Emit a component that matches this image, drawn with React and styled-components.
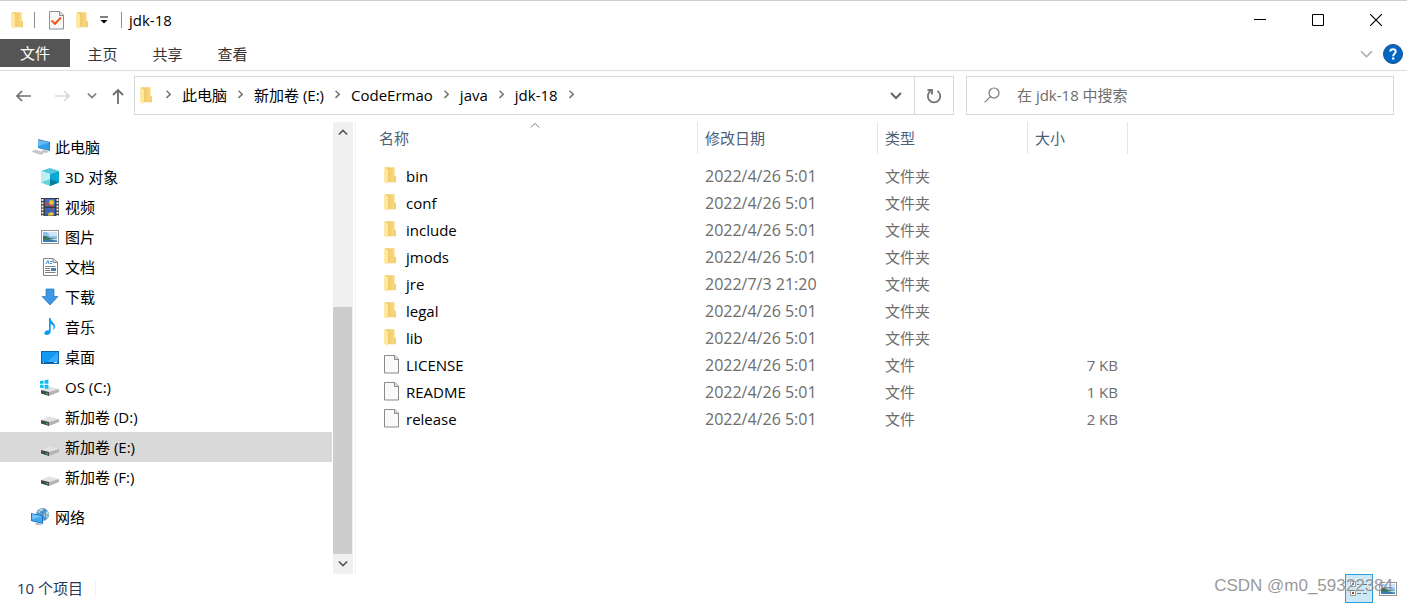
import React, { useState } from "react";
import styled, { createGlobalStyle, css } from 'styled-components';

const GlobalStyle = createGlobalStyle`
    * { box-sizing: border-box; }
    body {
        margin: 0;
        background: #fff;
        color: #000;
        font: 15px/20px "Open Sans", "Noto Sans CJK SC", sans-serif;
    }
    button, input {
        font: inherit;
        color: inherit;
        border: 0;
        padding: 0;
        margin: 0;
        background: none;
    }
    svg { display: block; flex: none; }
`

const Window = styled.div`
    position: relative;
    display: flex;
    flex-direction: column;
    min-height: 100vh;
`

const TitleBar = styled.header`
    display: flex;
    align-items: center;
    height: 39px;
    padding: 0 2px 0 11px;
    border-top: 1px solid #cdcdcd;
`

const QuickAccess = styled.div`
    display: flex;
    align-items: center;
    gap: 11px;
    height: 100%;
`

const QuickGroup = styled.div`
    display: flex;
    align-items: center;
    gap: 12px;
    padding: 0 13px 0 3px;
`

const BarLine = styled.span`
    width: 1px;
    height: 16px;
    background: #8c8c8c;
`

const Title = styled.h1`
    flex: 1;
    margin: 0 0 0 7px;
    font-size: 15px;
    font-weight: 400;
    line-height: 20px;
`

const IconButton = styled.button`
    display: flex;
    align-items: center;
    justify-content: center;
    width: ${p => p.$w ? p.$w + "px" : "auto"};
    height: ${p => p.$tall ? "100%" : "auto"};
`

const Ribbon = styled.nav`
    display: flex;
    height: 32px;
    border-bottom: 1px solid #dadbdc;
`

const Tab = styled.button`
    width: 65px;
    height: 28px;
    padding-top: 2px;
    color: #333;
    ${p => p.$file && css`
        width: 70px;
        padding-top: 0;
        background: #555;
        color: #fff;
    `}
`

const RibbonTools = styled.div`
    display: flex;
    align-items: center;
    gap: 10px;
    height: 30px;
    margin-left: auto;
    padding-right: 4px;
`

const AddressRow = styled.div`
    display: flex;
    align-items: flex-start;
    height: 51px;
    padding: 5px 13px 0 0;
`

const NavButtons = styled.div`
    display: grid;
    grid-template-columns: 40px 32px 25px 1fr;
    align-items: center;
    justify-items: start;
    width: 134px;
    height: 40px;
    padding-left: 15px;
`

const AddressBar = styled.div`
    flex: 1;
    display: flex;
    align-items: center;
    height: 39px;
    border: 1px solid #d9d9d9;
    padding-left: 5px;
`

const Crumbs = styled.div`
    flex: 1;
    display: flex;
    align-items: center;
    gap: 11px;
    padding: 0 0 2px 14px;
`

const RefreshBox = styled.div`
    display: flex;
    width: 39px;
    height: 100%;
    border-left: 1px solid #d9d9d9;
`

const SearchBox = styled.label`
    display: flex;
    align-items: center;
    gap: 17px;
    width: 428px;
    height: 39px;
    margin-left: 12px;
    padding: 0 0 2px 17px;
    border: 1px solid #d9d9d9;
    input {
        flex: 1;
        min-width: 0;
        outline: none;
    }
    input::placeholder { color: #6d6d6d; opacity: 1; }
`

const Main = styled.main`
    flex: 1;
    display: flex;
`

const SideBar = styled.ul`
    width: 333px;
    margin: 0;
    padding: 10px 1px 0 0;
    list-style: none;
`

const SideItem = styled.li`
    margin-top: ${p => p.$gap ? "10px" : "0"};
    button {
        display: flex;
        align-items: center;
        gap: ${p => p.$top ? "3px" : "5px"};
        width: 100%;
        height: 30px;
        padding-left: ${p => p.$top ? "30px" : "40px"};
        background: ${p => p.$active ? "#d9d9d9" : "transparent"};
    }
`

const ScrollBar = styled.div`
    display: flex;
    flex-direction: column;
    width: 20px;
    margin-right: 2px;
    background: #f0f0f0;
`

const ScrollTrack = styled.div`
    flex: 1;
    display: flex;
    align-items: flex-end;
    padding-right: 1px;
    &::after {
        content: "";
        width: 100%;
        height: 60%;
        background: #cdcdcd;
    }
`

const ScrollButton = styled(IconButton)`
    width: 20px;
    height: 20px;
`

const FilePane = styled.section`
    flex: 1;
    min-width: 0;
    padding-left: 15px;
    border-left: 1px solid #f2f2f2;
`

const FileTable = styled.table`
    width: 757px;
    table-layout: fixed;
    border-collapse: collapse;
    th {
        position: relative;
        height: 40px;
        padding: 0;
        vertical-align: top;
        text-align: left;
        font-weight: 400;
        color: #4c607a;
    }
    td {
        height: 27px;
        padding: 0 9px 0 7px;
        color: #6d6d6d;
    }
    td:last-child {
        padding-right: 10px;
        text-align: right;
    }
`

const DateCell = styled.td`
    font-size: 16px;
`

const HeadButton = styled.button`
    display: block;
    width: 100%;
    height: 32px;
    padding-left: ${p => p.$first ? "8px" : "7px"};
    border-right: 1px solid #e5e5e5;
    text-align: left;
`

const SortMark = styled.span`
    position: absolute;
    top: -2px;
    left: 50%;
    transform: translateX(-50%);
`

const FileName = styled.div`
    display: grid;
    grid-template-columns: 16px 1fr;
    gap: 6px;
    align-items: center;
    padding-left: 6px;
    color: #000;
`

const StatusBar = styled.footer`
    display: flex;
    align-items: center;
    height: 29px;
    padding: 0 10px 0 17px;
    color: #1e395b;
`

const StatusCount = styled.span`
    margin-bottom: 2px;
    padding-right: 12px;
    line-height: 14px;
    border-right: 1px solid #f0f0f0;
`

const ViewButtons = styled.div`
    display: flex;
    align-items: center;
    gap: 6px;
    margin-left: auto;
`

const ViewButton = styled(IconButton)`
    ${p => p.$active && css`
        width: 28px;
        height: 29px;
        border: 1px solid #26a0da;
        background: #cce8f7;
    `}
`

const Watermark = styled.span`
    position: absolute;
    right: 14px;
    bottom: 7px;
    font: 17px/20px "Liberation Sans", sans-serif;
    color: rgba(125, 125, 125, 0.8);
    text-shadow: -1px -1px 0 rgba(255, 255, 255, 0.6);
    pointer-events: none;
`

const Chevron = ({ dir = "down", size = 10, color = "#666", stroke = 2 }) => {
    const paths = {
        down: "M1 3 L6 8 L11 3",
        up: "M1 9 L6 4 L11 9",
    };
    return (
        <svg width={size} height={size} viewBox="0 0 12 12" fill="none" stroke={color} strokeWidth={stroke}>
            <path d={paths[dir]} />
        </svg>
    )
}

const CrumbArrow = () => (
    <svg width="5" height="9" viewBox="0 0 5 9" fill="none" stroke="#777" strokeWidth="1.6">
        <path d="M0.5 0.7 L4.2 4.3 L0.5 8" />
    </svg>
)

const Folder = () => (
    <svg width="12" height="17" viewBox="0 0 36 52">
        <defs>
            <linearGradient id="folderBack" x1="0" x2="1">
                <stop offset="0" stopColor="#ecc465" />
                <stop offset="1" stopColor="#fbdc83" />
            </linearGradient>
        </defs>
        <path d="M3 1 H32 V26 L36 29 V47 H8 Z" fill="url(#folderBack)" />
        <path d="M32 26 L36 29 V47 H31 V29 Z" fill="#f3cd6c" />
        <path d="M0 1 L12 8 V46 L9 51 L0 46 Z" fill="#ffe79f" />
    </svg>
)

const FilePage = () => (
    <svg width="15" height="19" viewBox="0 0 15 19">
        <path d="M.5 .5 H11 L14.5 4 V18 H.5 Z" fill="#fafafa" stroke="#8a8a8a" />
        <path d="M10.5 .5 V4.5 H14.5" fill="#ddd" stroke="#8a8a8a" />
    </svg>
)

const CheckPage = () => (
    <svg width="15" height="19" viewBox="0 0 15 19">
        <path d="M.5 .5 H11 L14.5 4 V18 H.5 Z" fill="#f8f8f8" stroke="#8a8f94" />
        <path d="M10.5 .5 V4.5 H14.5" fill="#ddd" stroke="#8a8f94" />
        <path d="M2.5 9.5 L6 12.8 L12 6.5" fill="none" stroke="#f0561d" strokeWidth="2" />
    </svg>
)

const Picture = () => (
    <svg width="18" height="14" viewBox="0 0 18 14">
        <rect x=".5" y=".5" width="17" height="13" fill="#fff" stroke="#949494" />
        <path d="M2 2 H16 V12 H2 Z" fill="#8cc0ee" />
        <path d="M6 2 H16 V6 H9 Z" fill="#cfe5f7" />
        <path d="M2 6 L5 6 L9 8 L16 9 V10 H2 Z" fill="#3c7350" />
        <path d="M2 9.5 L16 9.5 V12 H2 Z" fill="#3a7eb0" />
        <path d="M8 9.5 L16 9 V10.5 Z" fill="#dceff7" />
    </svg>
)

const Drive = ({ windows }) => (
    <svg width="20" height="20" viewBox="0 -2 20 20">
        <path d="M1 11 L9 7.5 L19 10 L9 13 Z" fill="#e2e2e5" />
        <path d="M9 13 L19 10 V13 L9 17 Z" fill="#b4b4b8" />
        <path d="M1 11 L9 13 V17 L1 14.5 Z" fill="#454848" />
        <path d="M6 14 L8 14.5 V15.5 L6 15 Z" fill="#38d742" />
        {windows && (
            <path d="M0 2 L3.6 1.4 V4.8 H0 Z M4.6 1.2 L8.4 .6 V4.8 H4.6 Z M0 5.8 H3.6 V9.2 L0 8.7 Z M4.6 5.8 H8.4 V10 L4.6 9.4 Z" fill="#10bdf2" />
        )}
    </svg>
)

const Computer = () => (
    <svg width="22" height="20" viewBox="0 0 22 20">
        <path d="M8 2 L20 5 V14 L8 11 Z" fill="#5e7386" />
        <path d="M8 3 L19 5.6 V13 L8 10.4 Z" fill="#32a0f0" />
        <path d="M8 3 L19 5.6 L8 9 Z" fill="#65bcf7" />
        <path d="M13 13 L18 14 L17 16 L11 14.5 Z" fill="#b6bdc4" />
        <path d="M1 14.5 L5 12.5 L15 15.5 L11 18 Z" fill="#d3d7dc" />
        <path d="M3 14.5 L12 17 M5 13.5 L13.5 16" stroke="#a9afb6" strokeWidth=".6" />
    </svg>
)

const Network = () => (
    <svg width="22" height="20" viewBox="0 0 22 20">
        <circle cx="12.5" cy="7.5" r="6.5" fill="#5a9cc6" />
        <path d="M7.5 4 Q10 1 14 1.4 L12 4 L9 6 Z M14 6 L18 4 Q19.5 8 17 11 L14 9 Z" fill="#b9dbed" />
        <path d="M8 3 Q14 6 18.5 9 M13 1 Q18 8 14 13" fill="none" stroke="#4380ad" strokeWidth=".7" />
        <path d="M1 6 L13 8.5 V17 L1 14 Z" fill="#1d78bd" />
        <path d="M2 7.2 L12 9.3 V15.7 L2 13.2 Z" fill="#42a8f1" />
        <path d="M2 7.2 L12 9.3 L2 12 Z" fill="#72c3f8" />
        <path d="M6 15.5 L10 16.5 L12 18.5 L5 17.5 Z" fill="#b5bcc3" />
    </svg>
)

const Cube = () => (
    <svg width="20" height="20" viewBox="0 0 20 20">
        <path d="M1 4 L10 1 L19 4 L10 7 Z" fill="#53c5dc" />
        <path d="M1 4 L10 7 V19 L1 15.5 Z" fill="#bdf0f4" />
        <path d="M10 7 L19 4 V15.5 L10 19 Z" fill="#08a9d0" />
        <path d="M1 15.5 L10 12 V19 Z" fill="#6bd3dc" />
        <path d="M10 12 L19 15.5 L10 19 Z" fill="#087d9d" />
    </svg>
)

const Film = () => (
    <svg width="20" height="20" viewBox="0 0 20 20">
        <rect x="1" y="1" width="18" height="18" fill="#3b3b3b" />
        <rect x="5" y="2" width="10" height="7.5" fill="#4570c8" />
        <rect x="5" y="11" width="10" height="7.5" fill="#3c62bc" />
        <circle cx="11.5" cy="5.5" r="2.4" fill="#efc332" />
        <path d="M6 6 H9 V8 H6 Z M10 8 H14 V9.5 H10 Z" fill="#c94736" />
        <path d="M8 17 Q12 13 14 17 L13 18.5 H8 Z" fill="#efc332" />
        <path d="M11 11.5 H14 V13 H11 Z" fill="#c94736" />
        <path d="M2.5 2 V19 M17.5 2 V19" stroke="#eee" strokeWidth="2" strokeDasharray="2 1.2" />
    </svg>
)

const Document = () => (
    <svg width="20" height="20" viewBox="0 0 20 20">
        <path d="M3.5 1.5 H13 L17.5 5 V18.5 H3.5 Z" fill="#fff" stroke="#858585" />
        <path d="M13 1.5 V5.5 H17" fill="#ddd" stroke="#858585" />
        <path d="M6 7 L8 3.5 L9 7 M10 4.5 H12 M10 6.5 H12" fill="none" stroke="#3a8bd0" />
        <path d="M5 9.5 H15.5 M5 11.5 H10 M5 13.5 H10 M5 15.5 H15.5" stroke="#7a8288" />
        <rect x="11" y="11" width="5" height="3" fill="#4a80b4" />
    </svg>
)

const Download = () => (
    <svg width="20" height="20" viewBox="0 0 20 20">
        <path d="M6 2 H14 V9.5 H18 L10 18 L2 9.5 H6 Z" fill="#3c97e4" stroke="#2675bc" strokeWidth=".7" />
    </svg>
)

const Music = () => (
    <svg width="20" height="20" viewBox="0 0 20 20">
        <path d="M9 1 H10.5 C10.8 5 15.5 6 15 10 C14.8 11.5 14 12.5 13 13 C14.5 9.5 13 7.5 10.7 7 V14.5 C10.7 17 8.5 18 6.8 18 C5 18 4.2 17 4.4 15.7 C4.7 13.8 7 12.8 9 13.3 Z" fill="#0b9cf3" />
    </svg>
)

const Desktop = () => (
    <svg width="20" height="20" viewBox="0 0 20 20">
        <rect x="1.5" y="4.5" width="17" height="12" fill="#1299f4" stroke="#0a69ae" />
        <path d="M7 15 L18 5 V15 Z" fill="#34acfa" />
        <path d="M2 15.5 H18" stroke="#075e9e" />
        <path d="M3 15.5 H4 M14 15.5 H17" stroke="#d6efff" />
    </svg>
)

const IconSlot = styled.span`
    display: flex;
    justify-content: center;
    width: ${p => p.$top ? "22px" : "20px"};
`

const sideItems = [
    { name: '此电脑', icon: <Computer />, top: true },
    { name: '3D 对象', icon: <Cube /> },
    { name: '视频', icon: <Film /> },
    { name: '图片', icon: <Picture /> },
    { name: '文档', icon: <Document /> },
    { name: '下载', icon: <Download /> },
    { name: '音乐', icon: <Music /> },
    { name: '桌面', icon: <Desktop /> },
    { name: 'OS (C:)', icon: <Drive windows /> },
    { name: '新加卷 (D:)', icon: <Drive /> },
    { name: '新加卷 (E:)', icon: <Drive /> },
    { name: '新加卷 (F:)', icon: <Drive /> },
    { name: '网络', icon: <Network />, top: true, gap: true },
];

const files = [
    { name: 'bin', date: '2022/4/26 5:01', folder: true },
    { name: 'conf', date: '2022/4/26 5:01', folder: true },
    { name: 'include', date: '2022/4/26 5:01', folder: true },
    { name: 'jmods', date: '2022/4/26 5:01', folder: true },
    { name: 'jre', date: '2022/7/3 21:20', folder: true },
    { name: 'legal', date: '2022/4/26 5:01', folder: true },
    { name: 'lib', date: '2022/4/26 5:01', folder: true },
    { name: 'LICENSE', date: '2022/4/26 5:01', size: '7 KB' },
    { name: 'README', date: '2022/4/26 5:01', size: '1 KB' },
    { name: 'release', date: '2022/4/26 5:01', size: '2 KB' },
];

const crumbs = ['此电脑', '新加卷 (E:)', 'CodeErmao', 'java', 'jdk-18'];

export default function App() {
    const [active, setActive] = useState('新加卷 (E:)');
    const [search, setSearch] = useState("");

    return (
        <Window>
            <GlobalStyle />
            <TitleBar>
                <QuickAccess>
                    <Folder />
                    <BarLine />
                    <QuickGroup>
                        <IconButton aria-label="属性"><CheckPage /></IconButton>
                        <IconButton aria-label="新建文件夹"><Folder /></IconButton>
                        <IconButton aria-label="自定义快速访问工具栏">
                            <svg width="8" height="8" viewBox="0 0 8 8">
                                <path d="M0 1 H8" stroke="#000" />
                                <path d="M.5 4 H7.5 L4 7.5 Z" />
                            </svg>
                        </IconButton>
                    </QuickGroup>
                </QuickAccess>
                <BarLine />
                <Title>jdk-18</Title>
                <IconButton $w={58} $tall aria-label="最小化">
                    <svg width="12" height="12"><path d="M0 5.5 H12" stroke="#000" /></svg>
                </IconButton>
                <IconButton $w={58} $tall aria-label="最大化">
                    <svg width="12" height="12"><path d="M.5 .5 H11.5 V11.5 H.5 Z" fill="none" stroke="#000" /></svg>
                </IconButton>
                <IconButton $w={58} $tall aria-label="关闭">
                    <svg width="12" height="12"><path d="M0 0 L12 12 M12 0 L0 12" stroke="#000" strokeWidth="1.2" /></svg>
                </IconButton>
            </TitleBar>

            <Ribbon>
                <Tab $file>文件</Tab>
                <Tab>主页</Tab>
                <Tab>共享</Tab>
                <Tab>查看</Tab>
                <RibbonTools>
                    <IconButton aria-label="展开功能区"><Chevron size={13} color="#a6a6a6" stroke={1.4} /></IconButton>
                    <IconButton aria-label="帮助">
                        <svg width="20" height="20" viewBox="0 0 20 20">
                            <circle cx="10" cy="10" r="9.5" fill="#0067c5" stroke="#1c4f80" />
                            <path d="M7.3 7.6 C7.3 4.3 12.7 4.4 12.7 7.5 C12.7 9.6 10.2 9.7 10.2 12.2" fill="none" stroke="#fff" strokeWidth="2" />
                            <rect x="9.1" y="13.4" width="2.2" height="2.2" fill="#fff" />
                        </svg>
                    </IconButton>
                </RibbonTools>
            </Ribbon>

            <AddressRow>
                <NavButtons>
                    <IconButton aria-label="后退">
                        <svg width="16" height="12" viewBox="0 0 16 12" fill="none" stroke="#6e6e6e" strokeWidth="1.7">
                            <path d="M16 6 H2 M7 1 L2 6 L7 11" />
                        </svg>
                    </IconButton>
                    <IconButton aria-label="前进">
                        <svg width="16" height="12" viewBox="0 0 16 12" fill="none" stroke="#d8d8d8" strokeWidth="1.7">
                            <path d="M0 6 H14 M9 1 L14 6 L9 11" />
                        </svg>
                    </IconButton>
                    <IconButton aria-label="最近位置"><Chevron color="#7b7b7b" /></IconButton>
                    <IconButton aria-label="上移">
                        <svg width="12" height="16" viewBox="0 0 12 16" fill="none" stroke="#6e6e6e" strokeWidth="1.8">
                            <path d="M6 16 V2 M1 7 L6 2 L11 7" />
                        </svg>
                    </IconButton>
                </NavButtons>
                <AddressBar>
                    <Folder />
                    <Crumbs>
                        <CrumbArrow />
                        {crumbs.map((name) => (
                            <React.Fragment key={name}>
                                <button>{name}</button>
                                <CrumbArrow />
                            </React.Fragment>
                        ))}
                    </Crumbs>
                    <IconButton $w={37} $tall aria-label="以前的位置"><Chevron size={12} /></IconButton>
                    <RefreshBox>
                        <IconButton $w={38} $tall aria-label="刷新">
                            <svg width="16" height="16" viewBox="0 0 16 16" fill="none" stroke="#777" strokeWidth="1.9">
                                <path d="M11.5 3 A6.2 6.2 0 1 1 5 2.8" />
                                <path d="M1.5 2 H6 V6.5" />
                            </svg>
                        </IconButton>
                    </RefreshBox>
                </AddressBar>
                <SearchBox>
                    <svg width="16" height="16" viewBox="0 0 16 16" fill="none" stroke="#7a7a7a" strokeWidth="1.2">
                        <circle cx="10" cy="6" r="5" />
                        <path d="M6.4 9.6 L.6 15.4" />
                    </svg>
                    <input
                        aria-label="搜索"
                        placeholder="在 jdk-18 中搜索"
                        value={search}
                        onChange={(e) => setSearch(e.target.value)}
                    />
                </SearchBox>
            </AddressRow>

            <Main>
                <SideBar>
                    {sideItems.map((item) => (
                        <SideItem key={item.name} $top={item.top} $gap={item.gap} $active={active === item.name}>
                            <button onClick={() => setActive(item.name)}>
                                <IconSlot $top={item.top}>{item.icon}</IconSlot>
                                {item.name}
                            </button>
                        </SideItem>
                    ))}
                </SideBar>
                <ScrollBar>
                    <ScrollButton aria-label="向上滚动"><Chevron dir="up" color="#555" /></ScrollButton>
                    <ScrollTrack />
                    <ScrollButton aria-label="向下滚动"><Chevron color="#555" /></ScrollButton>
                </ScrollBar>
                <FilePane>
                    <FileTable>
                        <colgroup>
                            <col width="327" />
                            <col width="180" />
                            <col width="150" />
                            <col width="100" />
                        </colgroup>
                        <thead>
                            <tr>
                                <th>
                                    <SortMark><Chevron dir="up" color="#777" stroke={1.2} /></SortMark>
                                    <HeadButton $first>名称</HeadButton>
                                </th>
                                <th><HeadButton>修改日期</HeadButton></th>
                                <th><HeadButton>类型</HeadButton></th>
                                <th><HeadButton>大小</HeadButton></th>
                            </tr>
                        </thead>
                        <tbody>
                            {files.map((file) => (
                                <tr key={file.name}>
                                    <td>
                                        <FileName>
                                            {file.folder ? <Folder /> : <FilePage />}
                                            {file.name}
                                        </FileName>
                                    </td>
                                    <DateCell>{file.date}</DateCell>
                                    <td>{file.folder ? '文件夹' : '文件'}</td>
                                    <td>{file.size}</td>
                                </tr>
                            ))}
                        </tbody>
                    </FileTable>
                </FilePane>
            </Main>

            <StatusBar>
                <StatusCount>10 个项目</StatusCount>
                <ViewButtons>
                    <ViewButton $active aria-label="详细信息">
                        <svg width="18" height="18" viewBox="0 0 18 18">
                            <path d="M.5 1.5 H5.5 V6.5 H.5 Z M.5 10.5 H5.5 V15.5 H.5 Z" fill="#fff" stroke="#999" />
                            <path d="M2 3 H4 V5 H2 Z" fill="#4a78b5" />
                            <path d="M2 12 H4 V14 H2 Z" fill="#b33a1c" />
                            <path d="M7 4.5 H11 M13 4.5 H17 M7 13.5 H11 M13 13.5 H17" stroke="#777" />
                        </svg>
                    </ViewButton>
                    <ViewButton aria-label="大图标"><Picture /></ViewButton>
                </ViewButtons>
            </StatusBar>
            <Watermark>CSDN @m0_59322384</Watermark>
        </Window>
    )
}
